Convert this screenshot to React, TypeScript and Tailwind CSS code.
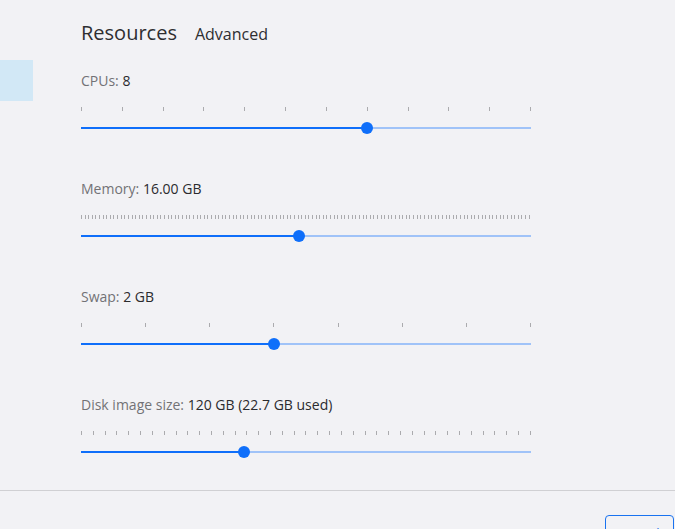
import React from 'react';

type Row = {
  label: string;
  value: string;
  ticks: number;
  frac: number;
};

const rows: Row[] = [
  { label: 'CPUs:', value: '8', ticks: 12, frac: 7 / 11 },
  { label: 'Memory:', value: '16.00 GB', ticks: 125, frac: 15 / 31 },
  { label: 'Swap:', value: '2 GB', ticks: 8, frac: 3 / 7 },
  { label: 'Disk image size:', value: '120 GB (22.7 GB used)', ticks: 39, frac: 0.3624 },
];

function SliderRow({ row }: { row: Row }) {
  return (
    <div className="h-[108px]">
      <div className="text-[14px] leading-5">
        <span className="text-[#727276]">{row.label}</span>{' '}
        <span className="text-[#2b2b2e]">{row.value}</span>
      </div>
      <div className="mt-4 flex h-1 w-[450px] justify-between">
        {Array.from({ length: row.ticks }).map((_, i) => (
          <div key={i} className="h-1 w-px bg-[#ababae]" />
        ))}
      </div>
      <div className="mt-[11px] flex h-3 w-[450px] items-center">
        <div className="h-[2px] bg-[#0f6ffa]" style={{ width: `${row.frac * 100}%` }} />
        <div className="-mx-[6px] z-10 h-3 w-3 shrink-0 rounded-full bg-[#0f6ffa]" />
        <div className="h-[2px] flex-1 bg-[#a0c3f8]" />
      </div>
    </div>
  );
}

export default function App() {
  return (
    <div
      className="flex h-[529px] w-[675px] flex-col overflow-hidden bg-[#f2f2f5]"
      style={{ fontFamily: '"Open Sans", "Noto Sans", sans-serif' }}
    >
      <div className="flex h-[490px] shrink-0">
        <div className="w-[33px] shrink-0">
          <div className="mt-[60px] h-[41px] bg-[#d2e8f6]" />
        </div>
        <div className="flex-1 pl-12 pt-[19px]">
          <div className="flex h-[28px] items-baseline gap-[18px]">
            <h1 className="text-[20px] leading-[28px] text-[#2e2e31]">Resources</h1>
            <span className="text-[16px] text-[#2e2e31]">Advanced</span>
          </div>
          <div className="mt-[24px] flex flex-col">
            {rows.map((r) => (
              <SliderRow key={r.label} row={r} />
            ))}
          </div>
        </div>
      </div>
      <div className="flex flex-1 justify-end border-t border-[#d0d0d3] pr-px pt-6">
        <button className="h-9 w-[69px] rounded border border-[#1a73f0] text-center text-[13px] leading-[18px] text-[#1a6fe8]">
          Cancel
        </button>
      </div>
    </div>
  );
}
